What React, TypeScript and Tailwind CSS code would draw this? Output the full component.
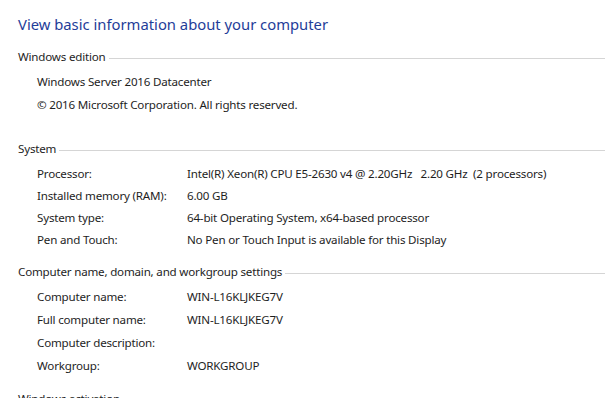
import React from 'react';

const font = { fontFamily: '"Segoe UI", "Noto Sans", "Open Sans", sans-serif' };

const SectionHeader = ({ title, className = '' }: { title: string; className?: string }) => (
  <div className={`flex h-[20px] items-center ${className}`}>
    <span className="text-[11.6px] tracking-[-0.2px] text-[#1e1e1e] whitespace-nowrap">{title}</span>
    <div className="ml-[3px] mt-[2px] h-px flex-1 bg-[#d5d5d5]" />
  </div>
);

const Row = ({ label, value, h = 'h-[23px]' }: { label: string; value?: string; h?: string }) => (
  <div className={`flex ${h} items-center pl-[19px] text-[11.6px] tracking-[-0.2px] text-[#1e1e1e] whitespace-pre`}>
    <span className="w-[150px] shrink-0">{label}</span>
    <span>{value}</span>
  </div>
);

export default function App() {
  return (
    <div className="h-[398px] w-[605px] overflow-hidden bg-white pl-[18px] pt-[14px]" style={font}>
      <h1 className="h-[20px] text-[14.8px] leading-[20px] text-[#1f3d99]">View basic information about your computer</h1>

      <SectionHeader title="Windows edition" className="mt-[13px]" />
      <div className="mt-[3px]">
        <Row label="Windows Server 2016 Datacenter" />
        <Row label="© 2016 Microsoft Corporation. All rights reserved." />
      </div>

      <SectionHeader title="System" className="mt-[23px]" />
      <div className="mt-[4px]">
        <Row h="h-[22px]" label="Processor:" value="Intel(R) Xeon(R) CPU E5-2630 v4 @ 2.20GHz   2.20 GHz  (2 processors)" />
        <Row h="h-[22px]" label="Installed memory (RAM):" value="6.00 GB" />
        <Row h="h-[22px]" label="System type:" value="64-bit Operating System, x64-based processor" />
        <Row h="h-[22px]" label="Pen and Touch:" value="No Pen or Touch Input is available for this Display" />
      </div>

      <SectionHeader title="Computer name, domain, and workgroup settings" className="mt-[11px]" />
      <div className="mt-[3px]">
        <Row label="Computer name:" value="WIN-L16KLJKEG7V" />
        <Row label="Full computer name:" value="WIN-L16KLJKEG7V" />
        <Row label="Computer description:" />
        <Row label="Workgroup:" value="WORKGROUP" />
      </div>

      <SectionHeader title="Windows activation" className="mt-[12px]" />
    </div>
  );
}
